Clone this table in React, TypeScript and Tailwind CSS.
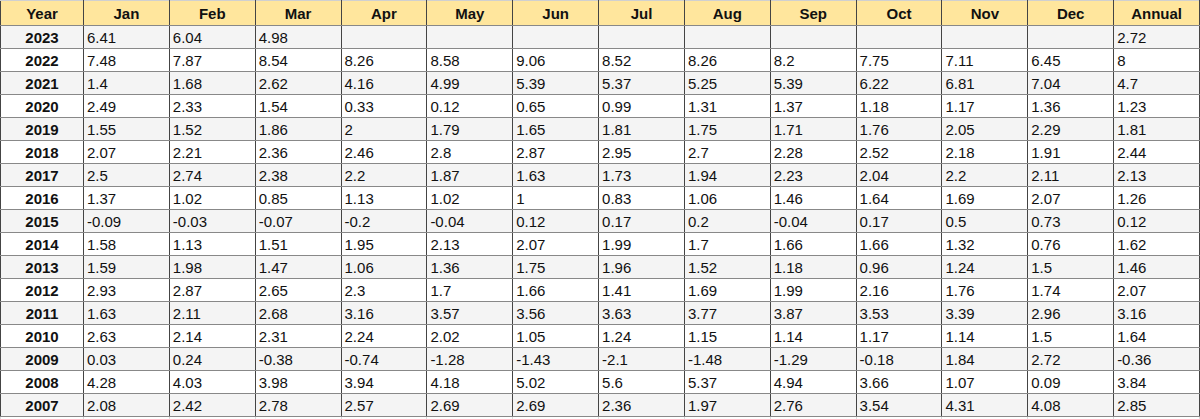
import React from 'react';

const months = ['Jan', 'Feb', 'Mar', 'Apr', 'May', 'Jun', 'Jul', 'Aug', 'Sep', 'Oct', 'Nov', 'Dec'];

const rows: [string, string[]][] = [
  ['2023', ['6.41', '6.04', '4.98', '', '', '', '', '', '', '', '', '', '2.72']],
  ['2022', ['7.48', '7.87', '8.54', '8.26', '8.58', '9.06', '8.52', '8.26', '8.2', '7.75', '7.11', '6.45', '8']],
  ['2021', ['1.4', '1.68', '2.62', '4.16', '4.99', '5.39', '5.37', '5.25', '5.39', '6.22', '6.81', '7.04', '4.7']],
  ['2020', ['2.49', '2.33', '1.54', '0.33', '0.12', '0.65', '0.99', '1.31', '1.37', '1.18', '1.17', '1.36', '1.23']],
  ['2019', ['1.55', '1.52', '1.86', '2', '1.79', '1.65', '1.81', '1.75', '1.71', '1.76', '2.05', '2.29', '1.81']],
  ['2018', ['2.07', '2.21', '2.36', '2.46', '2.8', '2.87', '2.95', '2.7', '2.28', '2.52', '2.18', '1.91', '2.44']],
  ['2017', ['2.5', '2.74', '2.38', '2.2', '1.87', '1.63', '1.73', '1.94', '2.23', '2.04', '2.2', '2.11', '2.13']],
  ['2016', ['1.37', '1.02', '0.85', '1.13', '1.02', '1', '0.83', '1.06', '1.46', '1.64', '1.69', '2.07', '1.26']],
  ['2015', ['-0.09', '-0.03', '-0.07', '-0.2', '-0.04', '0.12', '0.17', '0.2', '-0.04', '0.17', '0.5', '0.73', '0.12']],
  ['2014', ['1.58', '1.13', '1.51', '1.95', '2.13', '2.07', '1.99', '1.7', '1.66', '1.66', '1.32', '0.76', '1.62']],
  ['2013', ['1.59', '1.98', '1.47', '1.06', '1.36', '1.75', '1.96', '1.52', '1.18', '0.96', '1.24', '1.5', '1.46']],
  ['2012', ['2.93', '2.87', '2.65', '2.3', '1.7', '1.66', '1.41', '1.69', '1.99', '2.16', '1.76', '1.74', '2.07']],
  ['2011', ['1.63', '2.11', '2.68', '3.16', '3.57', '3.56', '3.63', '3.77', '3.87', '3.53', '3.39', '2.96', '3.16']],
  ['2010', ['2.63', '2.14', '2.31', '2.24', '2.02', '1.05', '1.24', '1.15', '1.14', '1.17', '1.14', '1.5', '1.64']],
  ['2009', ['0.03', '0.24', '-0.38', '-0.74', '-1.28', '-1.43', '-2.1', '-1.48', '-1.29', '-0.18', '1.84', '2.72', '-0.36']],
  ['2008', ['4.28', '4.03', '3.98', '3.94', '4.18', '5.02', '5.6', '5.37', '4.94', '3.66', '1.07', '0.09', '3.84']],
  ['2007', ['2.08', '2.42', '2.78', '2.57', '2.69', '2.69', '2.36', '1.97', '2.76', '3.54', '4.31', '4.08', '2.85']],
];

export default function App() {
  return (
    <div className="w-[1200px] h-[419px] overflow-hidden bg-white font-['Liberation_Sans',Arial,sans-serif] text-[15px] text-[#111]">
      <table className="w-full table-fixed border-collapse">
        <colgroup>
          <col className="w-[83px]" />
          {months.map(m => <col key={m} />)}
          <col />
        </colgroup>
        <thead>
          <tr className="h-[25px] bg-[#ffe69d]">
            {['Year', ...months, 'Annual'].map(h => (
              <th
                key={h}
                className="border-x border-x-[#444] border-t border-t-[#d0d0d0] border-b border-b-[#888] p-0 text-center font-bold leading-none"
              >
                {h}
              </th>
            ))}
          </tr>
        </thead>
        <tbody>
          {rows.map(([year, vals], i) => (
            <tr key={year} className={`h-[23px] ${i % 2 === 0 ? 'bg-[#f4f4f4]' : 'bg-white'}`}>
              <td className="border-x border-x-[#444] border-y border-y-[#888] p-0 text-center font-bold leading-none">
                {year}
              </td>
              {vals.map((v, j) => (
                <td key={j} className="border-x border-x-[#444] border-y border-y-[#888] py-0 pl-[3px] pr-0 text-left leading-none">
                  {v}
                </td>
              ))}
            </tr>
          ))}
          <tr className="h-[6px] bg-white">
            {Array.from({ length: 14 }).map((_, j) => (
              <td key={j} className="border-x border-x-[#ddd] p-0"></td>
            ))}
          </tr>
        </tbody>
      </table>
    </div>
  );
}
